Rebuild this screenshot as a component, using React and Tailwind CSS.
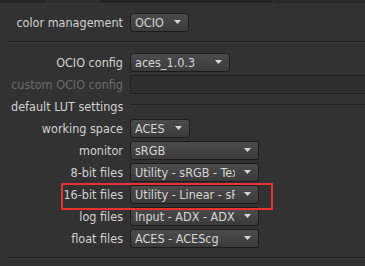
import React from "react"

const FONT = { fontFamily: '"DejaVu Sans Condensed", "DejaVu Sans", Verdana, sans-serif' }

function Arrow() {
  return (
    <svg width="7" height="4" viewBox="0 0 7 4" className="shrink-0">
      <path d="M0 0h7L3.5 4z" fill="#d8d8d8" />
    </svg>
  )
}

function Dropdown({ value, width }) {
  return (
    <div className={`${width} h-[19px] flex items-center rounded-[3px] border border-[#1c1c1c] bg-gradient-to-b from-[#4b4b4b] to-[#3b3b3b] pl-[4px] pr-[7px] gap-[9px]`}>
      <span className="flex-1 overflow-hidden whitespace-nowrap text-[12.5px] text-[#d6d6d6] leading-[17px]">{value}</span>
      <Arrow />
    </div>
  )
}

function Row({ label, children, dim }) {
  return (
    <div className="h-[22px] flex items-center">
      <div className={`w-[123px] shrink-0 text-right whitespace-nowrap text-[12.5px] leading-[17px] ${dim ? "text-[#6b6b6b]" : "text-[#d2d2d2]"}`}>{label}</div>
      <div className="pl-[7px] flex-1 flex items-center">{children}</div>
    </div>
  )
}

const LUTS = [
  ["working space", "ACES", "w-[60px]"],
  ["monitor", "sRGB", "w-[129px]"],
  ["8-bit files", "Utility - sRGB - Texture", "w-[129px]"],
  ["16-bit files", "Utility - Linear - sRGB", "w-[129px]"],
  ["log files", "Input - ADX - ADX10", "w-[129px]"],
  ["float files", "ACES - ACEScg", "w-[129px]"],
]

export default function App() {
  return (
    <div className="relative w-[365px] h-[266px] overflow-hidden bg-[#323232]" style={FONT}>
      <div className="h-[3px] flex">
        <div className="w-[45px] bg-[#262626]" />
        <div className="w-[55px] bg-[#2e2e2e]" />
        <div className="w-[173px] bg-[#232323]" />
        <div className="flex-1 bg-[#2a2a2a] border-l border-[#3a3a3a]" />
      </div>
      <div className="pt-[8px]">
        <Row label="color management"><Dropdown value="OCIO" width="w-[59px]" /></Row>
      </div>
      <div className="mt-[8px] ml-[8px] h-[2px] border-t border-[#1f1f1f] border-b border-b-[#3a3a3a]" />
      <div className="pt-[8px]">
        <Row label="OCIO config"><Dropdown value="aces_1.0.3" width="w-[100px]" /></Row>
        <Row label="custom OCIO config" dim>
          <div className="flex-1 h-[19px] border border-[#232323] border-r-0 bg-[#2e2e2e]" />
        </Row>
        <div className="h-[22px] flex items-center">
          <div className="pl-[11px] w-[130px] shrink-0 whitespace-nowrap text-[12.5px] leading-[17px] text-[#d2d2d2]">default LUT settings</div>
          <div className="flex-1 h-[2px] border-t border-[#1f1f1f] border-b border-b-[#3a3a3a] mt-[-2px]" />
        </div>
        {LUTS.map(([l, v, w]) => (
          <Row key={l} label={l}><Dropdown value={v} width={w} /></Row>
        ))}
      </div>
      <div className="mt-[8px] ml-[8px] h-[2px] border-t border-[#1f1f1f] border-b border-b-[#3a3a3a]" />
      <div className="absolute left-[61px] top-[183px] w-[212px] h-[27px] border-2 border-[#e8322f]" />
    </div>
  )
}
